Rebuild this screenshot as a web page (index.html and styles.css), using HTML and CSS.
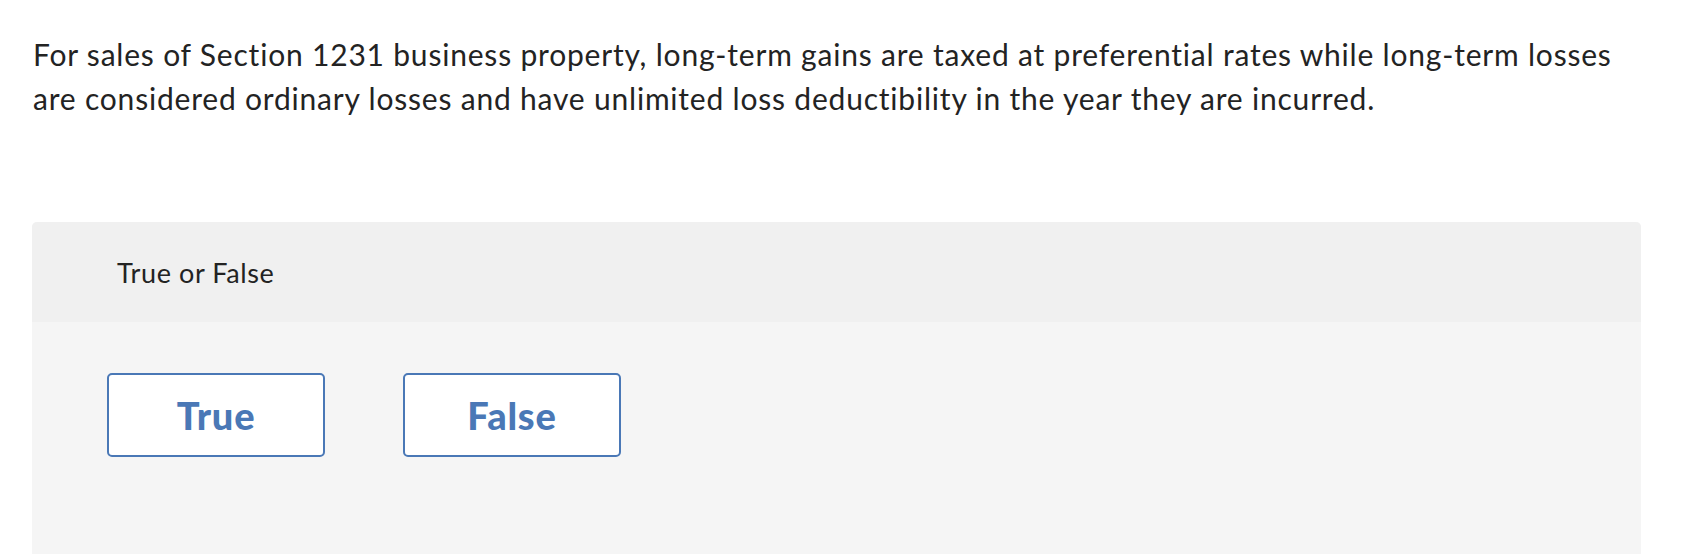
FILE: index.html
```html
<!DOCTYPE html>
<html>
<head>
    <title>True or False</title>
    <link rel="stylesheet" href="styles.css">
</head>
<body>
    <div class="question">
        <p class="prompt">For sales of Section 1231 business property, long-term gains are taxed at preferential rates while long-term losses are considered ordinary losses and have unlimited loss deductibility in the year they are incurred.</p>
        <div class="answer-panel">
            <div class="answer-header">True or False</div>
            <div class="answer-body">
                <button type="button" class="choice-btn">True</button>
                <button type="button" class="choice-btn">False</button>
            </div>
        </div>
    </div>
</body>
</html>
```

FILE: styles.css
```css
body {
    font-family: Lato, "Open Sans", sans-serif;
    background-color: #fff;
    color: #232323;
    margin: 0;
    padding: 0 65px 0 32px;
}

.question {
    padding-top: 32px;
}

.prompt {
    font-size: 30px;
    letter-spacing: 0.8px;
    line-height: 44px;
    margin: 0 0 102px 1px;
}

.answer-panel {
    border-radius: 5px 5px 0 0;
    overflow: hidden;
    height: 332px;
    background-color: #f5f5f5;
}

.answer-header {
    height: 100px;
    display: flex;
    align-items: center;
    padding-left: 85px;
    background-color: #f0f0f0;
    font-size: 27px;
    letter-spacing: 0.6px;
}

.answer-body {
    display: flex;
    gap: 78px;
    padding: 51px 0 0 75px;
}

.choice-btn {
    width: 218px;
    height: 84px;
    background-color: #fff;
    border: 2px solid #4a78b6;
    border-radius: 5px;
    color: #4a78b6;
    font-family: Lato, "Open Sans", sans-serif;
    font-weight: 900;
    font-size: 38px;
    letter-spacing: 0.8px;
    cursor: pointer;
}
```
